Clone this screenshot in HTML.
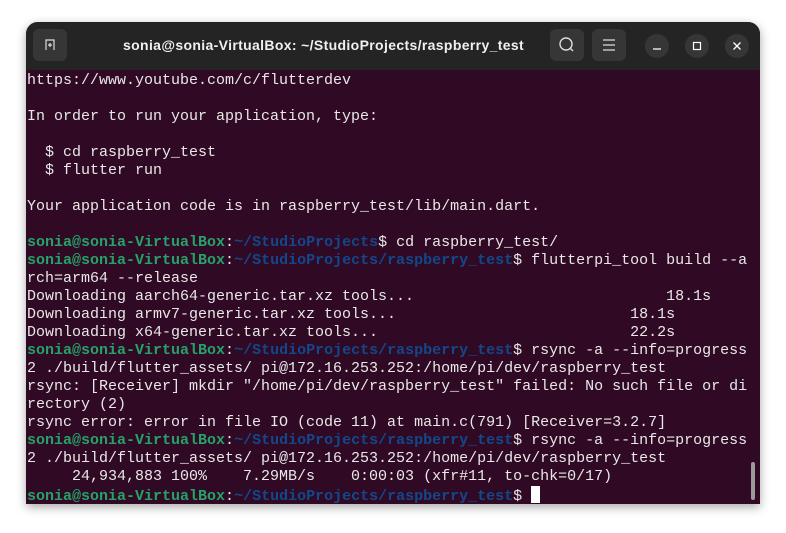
<!DOCTYPE html>
<html><head><style>
body{margin:0;width:786px;height:533px;background:#fff;overflow:hidden;position:relative;font-family:"Liberation Sans",sans-serif}
.win{position:absolute;left:26px;top:22px;width:734px;height:482px;border-radius:12px 12px 0 0;overflow:hidden;box-shadow:0 3px 10px rgba(0,0,0,.35);background:#300a24}
.tb{position:absolute;left:0;top:0;width:734px;height:48px;background:#242424}
.title{position:absolute;left:97px;top:15px;white-space:nowrap;color:#f0f0f0;font-weight:bold;font-size:14px;letter-spacing:0.35px}
.btn{position:absolute;top:7px;width:34px;height:32px;background:#363636;border-radius:6px}
.cb{position:absolute;top:12px;width:24px;height:24px;border-radius:50%;background:#363636}
pre{position:absolute;left:1px;top:50px;margin:0;font-family:"Liberation Mono",monospace;font-size:15px;line-height:18px;color:#e8e8e8}
.g{color:#26a269;font-weight:bold}.b{color:#12488b;font-weight:bold}
.cur{display:inline-block;width:9px;height:17px;background:#fff;vertical-align:-3px}
.sb{position:absolute;left:725px;top:440px;width:4px;height:38px;background:#9a9a9a;border-radius:2px}
</style></head><body>
<div class="win">
<div class="tb">
<div class="btn" style="left:7px"><svg width="34" height="32"><path d="M13 21V11h8v10M15 16h4M17 14v4" stroke="#ddd" stroke-width="1.2" fill="none"/></svg></div>
<div class="title">sonia@sonia-VirtualBox: ~/StudioProjects/raspberry_test</div>
<div class="btn" style="left:524px"><svg width="34" height="32"><circle cx="16" cy="15" r="6" stroke="#ddd" stroke-width="1.4" fill="none"/><path d="M20 19l3 3" stroke="#ddd" stroke-width="1.4"/></svg></div>
<div class="btn" style="left:566px"><svg width="34" height="32"><path d="M11 11h12M11 16h12M11 21h12" stroke="#ddd" stroke-width="1.2"/></svg></div>
<div class="cb" style="left:619px"><svg width="24" height="24"><path d="M8 15h8" stroke="#fff" stroke-width="1.3"/></svg></div>
<div class="cb" style="left:659px"><svg width="24" height="24"><rect x="8.5" y="8.5" width="7" height="7" stroke="#fff" stroke-width="1.2" fill="none"/></svg></div>
<div class="cb" style="left:699px"><svg width="24" height="24"><path d="M8.5 8.5l7 7M15.5 8.5l-7 7" stroke="#fff" stroke-width="1.3"/></svg></div>
</div>
<pre>https://www.youtube.com/c/flutterdev

In order to run your application, type:

  $ cd raspberry_test
  $ flutter run

Your application code is in raspberry_test/lib/main.dart.

<span class="g">sonia@sonia-VirtualBox</span>:<span class="b">~/StudioProjects</span>$ cd raspberry_test/
<span class="g">sonia@sonia-VirtualBox</span>:<span class="b">~/StudioProjects/raspberry_test</span>$ flutterpi_tool build --a
rch=arm64 --release
Downloading aarch64-generic.tar.xz tools...                            18.1s
Downloading armv7-generic.tar.xz tools...                          18.1s
Downloading x64-generic.tar.xz tools...                            22.2s
<span class="g">sonia@sonia-VirtualBox</span>:<span class="b">~/StudioProjects/raspberry_test</span>$ rsync -a --info=progress
2 ./build/flutter_assets/ pi@172.16.253.252:/home/pi/dev/raspberry_test
rsync: [Receiver] mkdir "/home/pi/dev/raspberry_test" failed: No such file or di
rectory (2)
rsync error: error in file IO (code 11) at main.c(791) [Receiver=3.2.7]
<span class="g">sonia@sonia-VirtualBox</span>:<span class="b">~/StudioProjects/raspberry_test</span>$ rsync -a --info=progress
2 ./build/flutter_assets/ pi@172.16.253.252:/home/pi/dev/raspberry_test
     24,934,883 100%    7.29MB/s    0:00:03 (xfr#11, to-chk=0/17)
<span class="g">sonia@sonia-VirtualBox</span>:<span class="b">~/StudioProjects/raspberry_test</span>$ <span class="cur"></span></pre>
<div class="sb"></div>
</div>
</body></html>
